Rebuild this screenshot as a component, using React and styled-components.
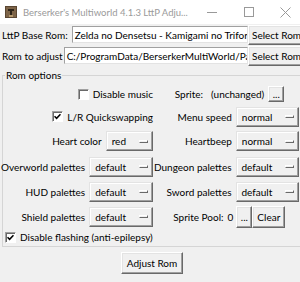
import React from 'react';
import styled, { createGlobalStyle } from 'styled-components';

const Global = createGlobalStyle`
  html, body { margin: 0; padding: 0; background: #f0f0f0; overflow: hidden; }
  body { font-family: Lato, "Noto Sans", sans-serif; font-size: 10px; color: #000; }
`;

const Window = styled.div`
  width: 304px;
  height: 282px;
  display: flex;
  flex-direction: column;
  background: #f0f0f0;
  overflow: hidden;
`;

const TitleBar = styled.div`
  height: 24px;
  flex: none;
  background: #fff;
  display: flex;
  align-items: center;
  padding-left: 5px;
`;

const TitleText = styled.span`
  margin-left: 6px;
  color: #9a9a9a;
  font-size: 9.5px;
  flex: 1;
  white-space: nowrap;
`;

const Ctrl = styled.div`
  width: 37px;
  height: 24px;
  display: flex;
  align-items: center;
  justify-content: center;
`;

const FileRow = styled.div`
  display: flex;
  align-items: center;
  height: 21px;
  padding-left: 2px;
  flex: none;
`;

const Label = styled.span`
  white-space: nowrap;
  margin-right: ${p => (p.$gap ?? 4)}px;
`;

const Entry = styled.div`
  flex: 1;
  min-width: 0;
  height: 17px;
  box-sizing: border-box;
  background: #fff;
  border: 1px solid;
  border-color: #a0a0a0 #e3e3e3 #e3e3e3 #a0a0a0;
  display: flex;
  align-items: center;
  padding-left: 2px;
  white-space: nowrap;
  overflow: hidden;
`;

const Button = styled.div`
  box-sizing: border-box;
  height: ${p => p.$h || 20}px;
  width: ${p => (p.$w ? p.$w + 'px' : 'auto')};
  flex: none;
  padding: 0 ${p => p.$px ?? 3}px;
  display: inline-flex;
  align-items: center;
  justify-content: ${p => (p.$center ? 'center' : 'flex-start')};
  background: #f0f0f0;
  border: 1px solid;
  border-color: #ffffff #696969 #696969 #ffffff;
  box-shadow: inset -1px -1px 0 #a0a0a0, inset 1px 1px 0 #e3e3e3;
  white-space: nowrap;
`;

const Frame = styled.fieldset`
  margin: 3px 0 0 2px;
  padding: 0 0 1px 0;
  border: 1px solid #d5d5d5;
  min-width: 0;
  flex: none;
`;

const Legend = styled.legend`
  padding: 0 1px;
  margin-left: 2px;
  line-height: 12px;
`;

const Grid = styled.div`
  display: grid;
  grid-template-columns: 151px 1fr;
  grid-template-rows: 22px 23px 26px 25px 25px 25px;
  padding-top: 2px;
`;

const Cell = styled.div`
  display: flex;
  align-items: center;
  justify-content: flex-end;
  padding-right: ${p => p.$pr || 0}px;
  white-space: nowrap;
`;

const CheckRow = styled.div`
  display: flex;
  align-items: center;
  height: 16px;
  padding-left: 2px;
`;

const Box = styled.span`
  box-sizing: border-box;
  width: 11px;
  height: 11px;
  flex: none;
  background: #fff;
  border: 1px solid;
  border-color: #a0a0a0 #ffffff #ffffff #a0a0a0;
  box-shadow: inset 1px 1px 0 #696969;
  margin-right: 4px;
  display: flex;
  align-items: center;
  justify-content: center;
`;

const Drop = styled.div`
  box-sizing: border-box;
  height: 20px;
  display: inline-flex;
  align-items: center;
  padding: 0 4px 0 5px;
  background: #f0f0f0;
  border: 1px solid;
  border-color: #e3e3e3 #696969 #696969 #e3e3e3;
  box-shadow: inset -1px -1px 0 #a0a0a0, inset 1px 1px 0 #ffffff;
  margin-left: 4px;
`;

const Indicator = styled.span`
  box-sizing: border-box;
  width: 9px;
  height: 3px;
  margin-left: 13px;
  border: 1px solid;
  border-color: #ffffff #696969 #696969 #ffffff;
`;

const Gap = styled.span`
  display: inline-block;
  width: ${p => p.$w}px;
`;

const AdjustRow = styled.div`
  display: flex;
  justify-content: center;
  padding-top: 5px;
`;

const Check = ({ checked }) => (
  <Box>
    {checked && (
      <svg width="7" height="7" viewBox="0 0 7 7">
        <path d="M0.5 3.2 L2.6 5.3 L6.5 1.2" stroke="#000" strokeWidth="1.6" fill="none" />
      </svg>
    )}
  </Box>
);

const Dropdown = ({ value }) => (
  <Drop>
    <span>{value}</span>
    <Indicator />
  </Drop>
);

const AppIcon = () => (
  <svg width="12" height="12" viewBox="0 0 12 12">
    <rect x="0" y="0" width="12" height="12" fill="#5a4632" />
    <rect x="1" y="1" width="10" height="10" fill="#7d6448" />
    <path d="M3 3 h6 v2 h-2 v4 h-2 v-4 h-2 z" fill="#2e2418" />
    <rect x="4" y="9" width="4" height="2" fill="#b69a6e" />
  </svg>
);

export default function App() {
  return (
    <>
      <Global />
      <Window>
        <TitleBar>
          <AppIcon />
          <TitleText>Berserker's Multiworld 4.1.3 LttP Adju...</TitleText>
          <Ctrl>
            <svg width="10" height="10" viewBox="0 0 10 10">
              <path d="M0 5.5 H10" stroke="#999" strokeWidth="1" />
            </svg>
          </Ctrl>
          <Ctrl>
            <svg width="10" height="10" viewBox="0 0 10 10">
              <rect x="0.5" y="0.5" width="9" height="9" stroke="#999" strokeWidth="1" fill="none" />
            </svg>
          </Ctrl>
          <Ctrl>
            <svg width="11" height="11" viewBox="0 0 11 11">
              <path d="M0.5 0.5 L10.5 10.5 M10.5 0.5 L0.5 10.5" stroke="#999" strokeWidth="1" />
            </svg>
          </Ctrl>
        </TitleBar>

        <FileRow>
          <Label $gap={4}>LttP Base Rom:</Label>
          <Entry>Zelda no Densetsu - Kamigami no Triforc</Entry>
          <Button $w={56}>Select Rom</Button>
        </FileRow>
        <FileRow>
          <Label $gap={1}>Rom to adjust</Label>
          <Entry>C:/ProgramData/BerserkerMultiWorld/Pat</Entry>
          <Button $w={56}>Select Rom</Button>
        </FileRow>

        <Frame>
          <Legend>Rom options</Legend>
          <Grid>
            <Cell $pr={1}>
              <Check />
              <span>Disable music</span>
            </Cell>
            <Cell $pr={21}>
              <span>Sprite:</span>
              <Gap $w={8} />
              <span>(unchanged)</span>
              <Gap $w={4} />
              <Button $h={16} $w={16} $px={0} $center>...</Button>
            </Cell>

            <Cell $pr={1}>
              <Check checked />
              <span>L/R Quickswapping</span>
            </Cell>
            <Cell $pr={6}>
              <span>Menu speed</span>
              <Dropdown value="normal" />
            </Cell>

            <Cell $pr={1}>
              <span>Heart color</span>
              <Dropdown value="red" />
            </Cell>
            <Cell $pr={6}>
              <span>Heartbeep</span>
              <Dropdown value="normal" />
            </Cell>

            <Cell $pr={1}>
              <span>Overworld palettes</span>
              <Dropdown value="default" />
            </Cell>
            <Cell $pr={6}>
              <span>Dungeon palettes</span>
              <Dropdown value="default" />
            </Cell>

            <Cell $pr={1}>
              <span>HUD palettes</span>
              <Dropdown value="default" />
            </Cell>
            <Cell $pr={6}>
              <span>Sword palettes</span>
              <Dropdown value="default" />
            </Cell>

            <Cell $pr={1}>
              <span>Shield palettes</span>
              <Dropdown value="default" />
            </Cell>
            <Cell $pr={20}>
              <span>Sprite Pool:</span>
              <Gap $w={4} />
              <span>0</span>
              <Gap $w={3} />
              <Button $h={22} $w={16} $px={0} $center>...</Button>
              <Button $h={22} $px={4}>Clear</Button>
            </Cell>
          </Grid>
          <CheckRow>
            <Check checked />
            <span>Disable flashing (anti-epilepsy)</span>
          </CheckRow>
        </Frame>

        <AdjustRow>
          <Button $h={22} $px={5}>Adjust Rom</Button>
        </AdjustRow>
      </Window>
    </>
  );
}
